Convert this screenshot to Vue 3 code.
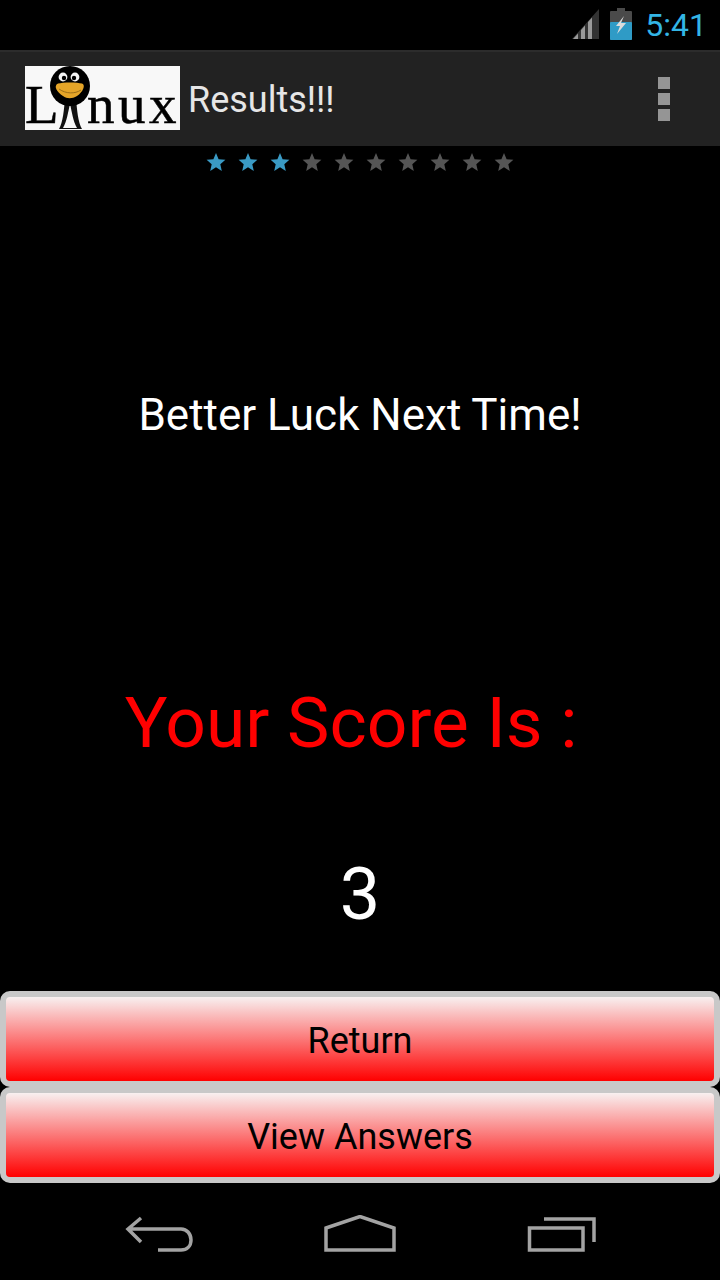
<script setup>
const stars = Array.from({ length: 10 }, (_, i) => i < 3)
</script>

<template>
  <div class="screen">
    <header class="status">
      <svg class="signal" width="30" height="32" viewBox="0 0 30 32">
        <path d="M1 31 L28 1 V31 Z" fill="#333" />
        <path d="M2 31 L7 25.5 V31 Z M10 31 V22 L14 17.5 V31 Z M17 31 V14 L21 9.5 V31 Z" fill="#9a9a9a" />
      </svg>
      <svg class="battery" width="22" height="32" viewBox="0 0 22 32">
        <rect x="7" y="0" width="8" height="3" fill="#4a4a4a" />
        <rect x="0" y="3" width="22" height="29" rx="1" fill="#4a4a4a" />
        <rect x="0" y="14" width="22" height="18" rx="1" fill="#2f9bc6" />
        <path d="M14 8 L6 18 H10 L7 26 L16 15 H11 Z" fill="#dcdcdc" />
      </svg>
      <span class="clock">5:41</span>
    </header>

    <nav class="actionbar">
      <div class="logo">
        <span class="logo-l">L</span>
        <span class="logo-nux">nux</span>
        <svg class="penguin" width="155" height="64" viewBox="0 0 155 64">
          <path d="M34 63 C38 56 39 44 40 32 H51 C52 44 53 56 57 63 Z" fill="#111" />
          <path d="M38 62 C42 55 43 46 45 38 C47 46 48 55 52 62 Z" fill="#f8f8f8" />
          <circle cx="45" cy="20" r="20" fill="#000" />
          <circle cx="38" cy="11" r="4.4" fill="#f4f4f4" />
          <circle cx="50" cy="11" r="4.4" fill="#f4f4f4" />
          <circle cx="39" cy="12" r="2.2" fill="#000" />
          <circle cx="49" cy="12" r="2.2" fill="#000" />
          <path d="M33 17.5 C38 16 52 16 57 17.5 C61 19 58 26 52 30 C47 33 42 33 38 30 C32 26 28 20 33 17.5 Z" fill="#e5a528" />
          <path d="M34 23 C41 28 50 28 56 24" fill="none" stroke="#8a6114" stroke-width="0.8" />
        </svg>
      </div>
      <span class="title">Results!!!</span>
      <div class="overflow">
        <i></i><i></i><i></i>
      </div>
    </nav>

    <div class="stars">
      <svg v-for="(on, i) in stars" :key="i" width="20" height="20" viewBox="0 0 20 20">
        <path
          d="M10 1 L12.6 7.2 L19.4 7.8 L14.3 12.2 L15.8 18.9 L10 15.3 L4.2 18.9 L5.7 12.2 L0.6 7.8 L7.4 7.2 Z"
          :fill="on ? '#3a9ac4' : '#555555'"
        />
      </svg>
    </div>

    <main class="content">
      <p class="luck">Better Luck Next Time!</p>
      <p class="score-label">Your Score Is : </p>
      <p class="score">3</p>
    </main>

    <div class="buttons">
      <button class="btn">Return</button>
      <button class="btn">View Answers</button>
    </div>

    <footer class="navbar">
      <svg width="70" height="40" viewBox="0 0 70 40" class="nav-icon">
        <path d="M16 3 L3 14 L16 27 M3 14 H56 C62 14 66 19 66 25 C66 31 62 35 56 35 H33" />
      </svg>
      <svg width="76" height="40" viewBox="0 0 76 40" class="nav-icon">
        <path d="M3 13 L37 1.5 L71 13 V35 H3 Z" />
      </svg>
      <svg width="72" height="40" viewBox="0 0 72 40" class="nav-icon">
        <path d="M3.5 13 H57 V35 H3.5 Z M18 4 H68 V27" />
      </svg>
    </footer>
  </div>
</template>

<style>
html, body { margin: 0; background: #000; }
</style>

<style scoped>
.screen {
  width: 720px;
  height: 1280px;
  background: #000;
  display: flex;
  flex-direction: column;
  font-family: Roboto, "Liberation Sans", sans-serif;
  overflow: hidden;
}
.status {
  height: 50px;
  flex: none;
  display: flex;
  align-items: center;
  justify-content: flex-end;
  padding-right: 13px;
  box-sizing: border-box;
}
.signal { margin-right: 9px; margin-top: -2px; filter: blur(0.7px); }
.battery { margin-right: 13px; margin-top: -2px; filter: blur(0.6px); }
.clock { color: #33b5e5; font-size: 32px; line-height: 50px; }
.actionbar {
  height: 96px;
  flex: none;
  box-sizing: border-box;
  background: #222;
  border-top: 2px solid #2c2c2c;
  display: flex;
  align-items: center;
  padding: 0 50px 0 25px;
}
.logo {
  position: relative;
  width: 155px;
  height: 64px;
  flex: none;
  background: #f8f8f8;
  margin-right: 8px;
  margin-top: -2px;
  display: flex;
  align-items: flex-end;
  font-family: "Liberation Serif", serif;
  font-size: 55px;
  line-height: 50px;
  color: #000;
  -webkit-text-stroke: 0.5px #000;
}
.logo-l { width: 62px; }
.logo-nux { letter-spacing: 3.5px; }
.penguin { position: absolute; left: 0; top: 0; }
.title { color: #e6e6e6; font-size: 36px; flex: 1; margin-top: 2px; }
.overflow { display: flex; flex-direction: column; gap: 4px; }
.overflow i { display: block; width: 12px; height: 12px; background: #959595; }
.stars {
  flex: none;
  height: 34px;
  box-sizing: border-box;
  padding-bottom: 2px;
  display: flex;
  justify-content: center;
  align-items: center;
  gap: 12px;
}
.stars svg { filter: blur(0.6px); }
.content {
  flex: 1;
  display: flex;
  flex-direction: column;
  align-items: center;
  text-align: center;
}
.content p { margin: 0; }
.luck { color: #fff; font-size: 44px; line-height: 52px; margin-top: 209px !important; }
.score-label { color: #f00; font-size: 71.3px; line-height: 84px; margin-top: 240px !important; white-space: pre; }
.score { color: #fff; font-size: 72px; line-height: 84px; margin-top: 88px !important; }
.buttons { flex: none; display: flex; flex-direction: column; }
.btn {
  height: 96px;
  box-sizing: border-box;
  width: 100%;
  border: 6px solid #c8c8c8;
  border-radius: 10px;
  background: linear-gradient(#f8f0f0, #ff0000);
  background-origin: padding-box;
  color: #000;
  font-family: inherit;
  font-size: 36px;
  padding: 4px 0 0;
}
.navbar {
  height: 97px;
  flex: none;
  box-sizing: border-box;
  display: flex;
  align-items: center;
  justify-content: space-between;
  padding: 7px 122px 0 125px;
}
.nav-icon { fill: none; stroke: #a3a3a3; stroke-width: 3.5; filter: blur(0.4px); }
</style>
